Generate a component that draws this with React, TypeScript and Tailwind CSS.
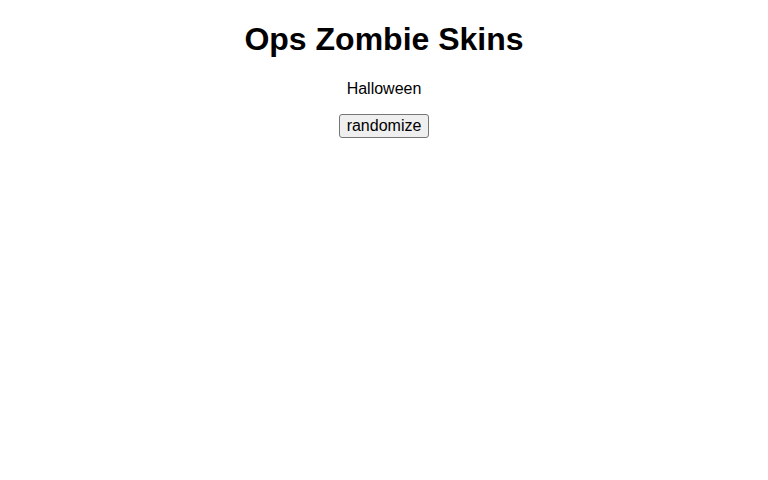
export default function App() {
  return (
    <div className="min-h-screen bg-white text-center font-['Liberation_Sans',Arial,sans-serif] text-black">
      <h1 className="pt-[21px] text-[32px] font-bold leading-[37px]">Ops Zombie Skins</h1>
      <p className="mt-[22px] text-base leading-[18px]">Halloween</p>
      <button className="mt-4 rounded-[3px] border border-[#767676] bg-[#efefef] px-[7px] py-[1px] text-base leading-[20px] hover:bg-[#e5e5e5]">
        randomize
      </button>
    </div>
  )
}
